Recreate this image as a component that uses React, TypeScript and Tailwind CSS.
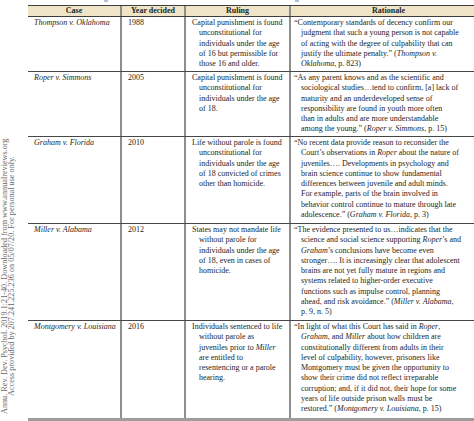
import React from 'react';

type Line = React.ReactNode;

interface CaseRow {
    name: string;
    year: string;
    height: string;
    last?: boolean;
    ruling: Line[];
    rationale: Line[];
}

const I = ({ children }: { children: React.ReactNode }) => <i>{children}</i>;

const rows: CaseRow[] = [
    {
        name: 'Thompson v. Oklahoma',
        year: '1988',
        height: 'h-[55px]',
        ruling: [
            'Capital punishment is found',
            'unconstitutional for',
            'individuals under the age',
            'of 16 but permissible for',
            'those 16 and older.',
        ],
        rationale: [
            '\u201CContemporary standards of decency confirm our',
            'judgment that such a young person is not capable',
            'of acting with the degree of culpability that can',
            <>justify the ultimate penalty.&rdquo; (<I>Thompson v.</I></>,
            <><I>Oklahoma</I>, p. 823)</>,
        ],
    },
    {
        name: 'Roper v. Simmons',
        year: '2005',
        height: 'h-[65px]',
        ruling: [
            'Capital punishment is found',
            'unconstitutional for',
            'individuals under the age',
            'of 18.',
        ],
        rationale: [
            '\u201CAs any parent knows and as the scientific and',
            'sociological studies\u2026tend to confirm, [a] lack of',
            'maturity and an underdeveloped sense of',
            'responsibility are found in youth more often',
            'than in adults and are more understandable',
            <>among the young.&rdquo; (<I>Roper v. Simmons</I>, p. 15)</>,
        ],
    },
    {
        name: 'Graham v. Florida',
        year: '2010',
        height: 'h-[87px]',
        ruling: [
            'Life without parole is found',
            'unconstitutional for',
            'individuals under the age',
            'of 18 convicted of crimes',
            'other than homicide.',
        ],
        rationale: [
            '\u201CNo recent data provide reason to reconsider the',
            <>Court&rsquo;s observations in <I>Roper</I> about the nature of</>,
            'juveniles\u2026. Developments in psychology and',
            'brain science continue to show fundamental',
            'differences between juvenile and adult minds.',
            'For example, parts of the brain involved in',
            'behavior control continue to mature through late',
            <>adolescence.&rdquo; (<I>Graham v. Florida</I>, p. 3)</>,
        ],
    },
    {
        name: 'Miller v. Alabama',
        year: '2012',
        height: 'h-[97px]',
        ruling: [
            'States may not mandate life',
            'without parole for',
            'individuals under the age',
            'of 18, even in cases of',
            'homicide.',
        ],
        rationale: [
            '\u201CThe evidence presented to us\u2026indicates that the',
            <>science and social science supporting <I>Roper</I>&rsquo;s and</>,
            <><I>Graham</I>&rsquo;s conclusions have become even</>,
            'stronger\u2026. It is increasingly clear that adolescent',
            'brains are not yet fully mature in regions and',
            'systems related to higher-order executive',
            'functions such as impulse control, planning',
            <>ahead, and risk avoidance.&rdquo; (<I>Miller v. Alabama</I>,</>,
            'p. 9, n. 5)',
        ],
    },
    {
        name: 'Montgomery v. Louisiana',
        year: '2016',
        height: 'h-[100px]',
        last: true,
        ruling: [
            'Individuals sentenced to life',
            'without parole as',
            <>juveniles prior to <I>Miller</I></>,
            'are entitled to',
            'resentencing or a parole',
            'hearing.',
        ],
        rationale: [
            <>&ldquo;In light of what this Court has said in <I>Roper</I>,</>,
            <><I>Graham</I>, and <I>Miller</I> about how children are</>,
            'constitutionally different from adults in their',
            'level of culpability, however, prisoners like',
            'Montgomery must be given the opportunity to',
            'show their crime did not reflect irreparable',
            'corruption; and, if it did not, their hope for some',
            'years of life outside prison walls must be',
            <>restored.&rdquo; (<I>Montgomery v. Louisiana</I>, p. 15)</>,
        ],
    },
];

const cols = 'grid grid-cols-[94px_64px_105px_195px]';
const divider = 'border-r-2 border-[#8e8e8e]';

// hanging indent: the block is padded, the first line pulled back out
const Hanging = ({ lines }: { lines: Line[] }) => (
    <div className="pl-[7px]">
        {lines.map((line, i) => (
            <div key={i} className={i === 0 ? '-ml-[7px] whitespace-nowrap' : 'whitespace-nowrap'}>
                {line}
            </div>
        ))}
    </div>
);

const App = () => {
    return (
        <div className="w-[474px] h-[421px] overflow-hidden bg-white flex font-['Liberation_Serif',serif] text-[#262626]">

            {/* Download notice in the margin */}
            <div className="w-[28px] shrink-0 flex pl-[1px]">
                <div className="mt-[131px] h-[290px] [writing-mode:vertical-rl] rotate-180 text-center text-[8.2px] leading-[7px] text-[#666] whitespace-nowrap">
                    <div>Annu. Rev. Dev. Psychol. 2019.1:21-40. Downloaded from www.annualreviews.org</div>
                    <div>Access provided by 207.241.225.236 on 05/07/20. For personal use only.</div>
                </div>
            </div>

            {/* Table */}
            <div className="w-[458px] shrink-0 flex flex-col">
                <div className="h-[5px] flex items-start">
                    <span className="ml-[76px] w-[4px] h-[2px] bg-[#a9c3df]" />
                    <span className="ml-[187px] w-[4px] h-[2px] bg-[#a9c3df]" />
                </div>

                {/* Header */}
                <div className={`${cols} h-[12px] bg-[#efe5c6] border-y border-[#3d3d3d] text-[8px] leading-[10px] font-bold text-[#1f1f1f]`}>
                    <div className={`${divider} text-center`}>Case</div>
                    <div className={`${divider} text-center`}>Year decided</div>
                    <div className={`${divider} text-center`}>Ruling</div>
                    <div className="text-center">Rationale</div>
                </div>

                {/* Body */}
                {rows.map((row) => (
                    <div
                        key={row.name}
                        className={`${cols} ${row.height} text-[8px] leading-[10.3px] ${
                            row.last ? 'border-b-[3px] border-[#9d9d9d]' : 'border-b border-[#474747]'
                        }`}
                    >
                        <div className={`${divider} pl-[6px] pt-[1px] italic whitespace-nowrap`}>{row.name}</div>
                        <div className={`${divider} pl-[6px] pt-[1px]`}>{row.year}</div>
                        <div className={`${divider} pl-[6px] pt-[1px]`}>
                            <Hanging lines={row.ruling} />
                        </div>
                        <div className="pl-[3px] pt-[1px]">
                            <Hanging lines={row.rationale} />
                        </div>
                    </div>
                ))}
            </div>
        </div>
    );
};

export default App;
